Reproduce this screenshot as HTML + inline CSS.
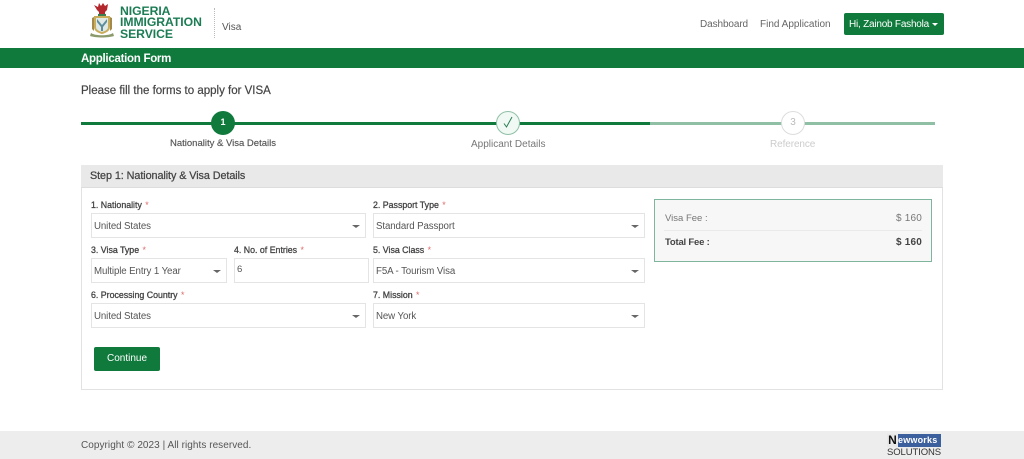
<!DOCTYPE html>
<html><head><meta charset="utf-8"><title>Application Form</title>
<style>
*{box-sizing:border-box}
html,body{margin:0;padding:0;background:#fff}
body{width:1024px;height:459px;position:relative;overflow:hidden;font-family:"Liberation Sans",sans-serif;color:#555}
.a{position:absolute;white-space:nowrap}
.l{position:absolute;white-space:nowrap;font-size:8.800px;line-height:10px;color:#444;-webkit-text-stroke:.3px #444}
.l span{color:#e06a6a;-webkit-text-stroke:0;margin-left:1px}
.s{position:absolute;height:25px;background:#fff;border:1px solid #e4e4e4;font-size:9.700px;line-height:25px;padding-left:2px;color:#555;letter-spacing:-.1px;white-space:nowrap}
.s:after{content:"";position:absolute;right:5px;top:11px;border:4px solid transparent;border-top:3.500px solid #666;border-bottom:0}
.c{position:absolute;width:24px;height:24px;border-radius:50%;text-align:center;font-size:10px;line-height:23px}
</style></head><body>

<svg class="a" style="left:88px;top:2px" width="28" height="38" viewBox="0 0 28 38">
<path d="M9 8 L6 3 L10 5 L11 1 L13 4 L15 1 L17 4 L20 2 L19 8 L17 10 L17 13 L11 13 L11 10Z" fill="#b3282d"/>
<path d="M10 12h8v2h-8z" fill="#3d7d4f"/>
<path d="M6 14h16v11c0 4-4 6-8 7-4-1-8-3-8-7z" fill="#c9ad5a"/>
<path d="M8 16h12v9c0 3-3 4-6 5-3-1-6-2-6-5z" fill="#dfe9e6"/>
<path d="M9 17l5 6 5-6v3l-4 5v4h-2v-4l-4-5z" fill="#5d8d9c"/>
<path d="M3 31c4 3 18 3 22 0l1 3c-6 2-18 2-24 0z" fill="#8a9a6a"/>
<path d="M4 16l2-1v14l-2-2zM24 16l-2-1v14l2-2z" fill="#a38a4a"/>
</svg>
<div class="a" style="left:120px;top:5.500px;font-size:12.200px;line-height:11.500px;font-weight:bold;color:#1c7d55;letter-spacing:-.05px">NIGERIA<br>IMMIGRATION<br>SERVICE</div>
<div class="a" style="left:214px;top:8px;height:30px;border-left:1px dotted #bbb"></div>
<div class="a" style="left:222px;top:22px;font-size:10px;line-height:12px;color:#555">Visa</div>

<div class="a" style="left:700px;top:18.500px;font-size:10px;line-height:12px;color:#666;letter-spacing:-.1px">Dashboard</div>
<div class="a" style="left:760px;top:18.500px;font-size:10px;line-height:12px;color:#666">Find Application</div>
<div class="a" style="left:844px;top:13px;width:100px;height:22px;background:#107a3c;border-radius:2px;color:#fff;font-size:10px;line-height:23px;padding-left:5px;letter-spacing:-.22px">Hi, Zainob Fashola</div>
<div class="a" style="left:932px;top:23px;border:3.500px solid transparent;border-top:3.500px solid #fff;border-bottom:0"></div>

<div class="a" style="left:0;top:48px;width:1024px;height:20px;background:#107a3c"></div>
<div class="a" style="left:81px;top:52px;font-size:11.500px;line-height:14px;font-weight:bold;color:#fff;letter-spacing:-.28px">Application Form</div>

<div class="a" style="left:81px;top:85px;font-size:11.500px;line-height:13px;color:#444;-webkit-text-stroke:.2px #444">Please fill the forms to apply for VISA</div>

<div class="a" style="left:81px;top:122px;width:569px;height:3px;background:#107a3c"></div>
<div class="a" style="left:650px;top:122px;width:285px;height:3px;background:#8fc0a6"></div>
<div class="c" style="left:211px;top:111px;background:#107a3c;color:#fff;font-weight:bold;font-size:9px">1</div>
<div class="c" style="left:496px;top:111px;background:#f0f9f4;border:1px solid #8fc0a6"></div>
<svg class="a" style="left:501px;top:115px" width="14" height="15" viewBox="0 0 14 15"><path d="M3 8.500 L5.500 12 L11 2" fill="none" stroke="#2a7f52" stroke-width="1"/></svg>
<div class="c" style="left:781px;top:111px;background:#fff;border:1px solid #ddd;color:#bbb;line-height:21px">3</div>
<div class="a" style="left:170px;top:137.500px;font-size:9.500px;line-height:12px;color:#555;-webkit-text-stroke:.15px #555">Nationality &amp; Visa Details</div>
<div class="a" style="left:471px;top:138.500px;font-size:10px;line-height:12px;color:#777">Applicant Details</div>
<div class="a" style="left:770px;top:138.500px;font-size:10px;line-height:12px;color:#ccc;letter-spacing:-.1px">Reference</div>

<div class="a" style="left:81px;top:165px;width:862px;height:225px;border:1px solid #e2e2e2"></div>
<div class="a" style="left:81px;top:165px;width:862px;height:23px;background:#e9e9e9;border-bottom:1px solid #ddd"></div>
<div class="a" style="left:90px;top:170px;font-size:10.800px;line-height:13px;color:#444;letter-spacing:-.07px;-webkit-text-stroke:.25px #444">Step 1: Nationality &amp; Visa Details</div>

<div class="l" style="left:91px;top:200px">1. Nationality <span>*</span></div>
<div class="l" style="left:373px;top:200px">2. Passport Type <span>*</span></div>
<div class="s" style="left:91px;top:213px;width:275px">United States</div>
<div class="s" style="left:373px;top:213px;width:272px">Standard Passport</div>

<div class="l" style="left:91px;top:245px">3. Visa Type <span>*</span></div>
<div class="l" style="left:234px;top:245px">4. No. of Entries <span>*</span></div>
<div class="l" style="left:373px;top:245px">5. Visa Class <span>*</span></div>
<div class="s" style="left:91px;top:258px;width:136px">Multiple Entry 1 Year</div>
<div class="a" style="left:234px;top:258px;width:135px;height:25px;border:1px solid #e4e4e4;font-size:9.500px;line-height:22px;padding-left:2px;color:#555">6</div>
<div class="s" style="left:373px;top:258px;width:272px">F5A - Tourism Visa</div>

<div class="l" style="left:91px;top:290px">6. Processing Country <span>*</span></div>
<div class="l" style="left:373px;top:290px">7. Mission <span>*</span></div>
<div class="s" style="left:91px;top:303px;width:275px">United States</div>
<div class="s" style="left:373px;top:303px;width:272px">New York</div>

<div class="a" style="left:94px;top:347px;width:66px;height:24px;background:#107a3c;border-radius:2px;color:#fff;font-size:10px;line-height:23px;text-align:center">Continue</div>

<div class="a" style="left:654px;top:199px;width:278px;height:63px;background:#f7f7f7;border:1px solid #7fb59c"></div>
<div class="a" style="left:664px;top:230px;width:258px;border-top:1px solid #eaeaea"></div>
<div class="a" style="left:665px;top:212.500px;font-size:9.500px;line-height:12px;color:#777">Visa Fee :</div>
<div class="a" style="right:102px;top:212.500px;font-size:10px;line-height:12px;color:#777;letter-spacing:.2px">$ 160</div>
<div class="a" style="left:665px;top:236.500px;font-size:9.500px;line-height:12px;color:#444;font-weight:bold;letter-spacing:-.2px">Total Fee :</div>
<div class="a" style="right:102px;top:236.500px;font-size:10px;line-height:12px;color:#444;font-weight:bold;letter-spacing:.2px">$ 160</div>

<div class="a" style="left:0;top:431px;width:1024px;height:28px;background:#ededed"></div>
<div class="a" style="left:81px;top:439.500px;font-size:10px;line-height:12px;color:#555;letter-spacing:.05px">Copyright © 2023 | All rights reserved.</div>
<div class="a" style="left:887px;top:434px;width:54px;height:13px;background:#3c5f9e"></div>
<div class="a" style="left:887px;top:434px;width:11px;height:13px;background:#e8e8e8;color:#111;font-size:12px;line-height:13px;font-weight:bold;text-align:center">N</div>
<div class="a" style="left:898px;top:435px;font-size:9px;line-height:11px;color:#fff;font-weight:bold;letter-spacing:.2px">ewworks</div>
<div class="a" style="left:887px;top:447px;font-size:9.500px;line-height:11px;color:#333;letter-spacing:-.1px">SOLUTIONS</div>
</body></html>
